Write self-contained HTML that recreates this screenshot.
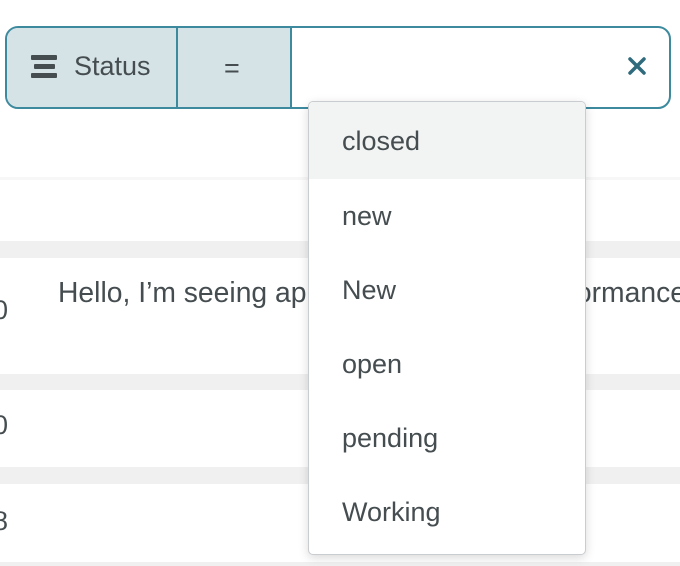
<!DOCTYPE html>
<html><head><style>
*{margin:0;padding:0;box-sizing:border-box}
body{width:680px;height:566px;overflow:hidden;background:#f0f0f0;font-family:"Liberation Sans",sans-serif;color:#454d50;position:relative}
.top{position:absolute;left:0;top:0;width:680px;height:241px;background:#fff}
.row{position:absolute;left:0;width:680px;background:#fff;overflow:hidden}
.num{position:absolute;left:-22px;font-size:27px}
.bar{position:absolute;left:5px;top:26px;width:666px;height:83px;border:2px solid #3d8a9e;border-radius:13px;background:#fff;overflow:hidden}
.seg{position:absolute;top:0;height:100%;background:#d5e2e6;border-right:2px solid #3d8a9e}
.dd{position:absolute;left:308px;top:101px;width:278px;height:454px;background:#fff;border:1px solid #c9cdd0;border-radius:5px;box-shadow:0 3px 10px rgba(0,0,0,.15);overflow:hidden}
.it{height:74px;padding-left:33px;font-size:27px;line-height:74px}
</style></head><body>
<div class="top"><div style="position:absolute;left:0;top:177px;width:680px;height:3px;background:#f7f7f7"></div></div>
<div class="row" style="top:258px;height:116px"><span class="num" style="top:37px">10</span><div style="position:absolute;left:58px;top:18px;font-size:28.3px;white-space:nowrap">Hello, I’m seeing apparent</div><div style="position:absolute;right:-6px;top:18px;font-size:28.3px;white-space:nowrap">performance</div></div>
<div class="row" style="top:390px;height:77px"><span class="num" style="top:20px">10</span></div>
<div class="row" style="top:484px;height:78px"><span class="num" style="top:22px">18</span></div>
<div class="bar">
 <div class="seg" style="left:0;width:171px">
  <svg style="position:absolute;left:24px;top:27px" width="26" height="24"><rect x="0" y="0" width="26" height="5" rx="1" fill="#454d50"/><rect x="3" y="9" width="21" height="5" rx="1" fill="#454d50"/><rect x="0" y="18" width="26" height="5" rx="1" fill="#454d50"/></svg>
  <span style="position:absolute;left:67px;top:23px;font-size:27px">Status</span>
 </div>
 <div class="seg" style="left:171px;width:114px"><span style="position:absolute;left:46px;top:25px;font-size:27px">=</span></div>
 <svg style="position:absolute;left:621px;top:29px" width="18" height="18"><path d="M2 2L16 16M16 2L2 16" stroke="#2f6b7c" stroke-width="3.5" stroke-linecap="round"/></svg>
</div>
<div class="dd">
 <div class="it" style="background:#f2f4f3;height:77px;line-height:78px">closed</div>
 <div class="it">new</div>
 <div class="it">New</div>
 <div class="it">open</div>
 <div class="it">pending</div>
 <div class="it">Working</div>
</div>
</body></html>
